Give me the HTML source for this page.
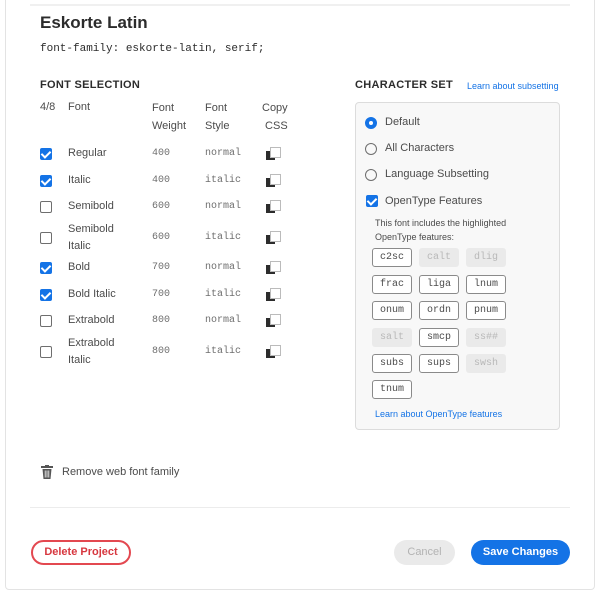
<!DOCTYPE html>
<html><head><style>
*{margin:0;padding:0;box-sizing:border-box}
body{width:600px;height:596px;background:#fff;font-family:"Liberation Sans",sans-serif;color:#2c2c2c;position:relative;overflow:hidden}
.a{position:absolute;white-space:nowrap}
.card{position:absolute;left:5px;top:-5px;width:590px;height:595px;border:1px solid #e3e3e3;border-radius:4px}
.mono{font-family:"Liberation Mono",monospace}
.cb{position:absolute;width:12px;height:12px;border-radius:2px}
.on{background:#1473e6}
.on::after{content:"";position:absolute;left:3px;top:1px;width:4px;height:7px;border:solid #fff;border-width:0 2px 2px 0;transform:rotate(45deg)}
.off{border:1.5px solid #6e6e6e}
.t{font-size:11px;color:#4b4b4b}
.m{font-size:10px;color:#6e6e6e;font-family:"Liberation Mono",monospace}
.cp{position:absolute;width:13px;height:13px}
.cp i{position:absolute;left:4px;top:0;width:9px;height:9px;border:1px solid #bbb;background:#fff}
.cp b{position:absolute;left:0;top:4px;width:9px;height:9px;background:#2c2c2c}
.cp b::after{content:"";position:absolute;left:4px;top:-4px;width:9px;height:9px;border:1px solid #bbb;background:#fff}
.chip{position:absolute;width:40px;height:19px;border:1px solid #8a8a8a;border-radius:3px;font-family:"Liberation Mono",monospace;font-size:10px;text-align:center;line-height:17px;color:#4b4b4b;background:#fff}
.dis{border-color:#eaeaea;background:#eaeaea;color:#b8b8b8}
.rad{position:absolute;width:12px;height:12px;border-radius:50%;border:1.5px solid #6e6e6e}
</style></head><body>
<div class="card"></div>
<div class="a" style="left:30px;top:4px;width:540px;border-top:2px solid #f0f0f0"></div>
<div class="a" style="left:40px;top:13px;font-size:17px;font-weight:bold;color:#2c2c2c">Eskorte Latin</div>
<div class="a mono" style="left:40px;top:43px;font-size:11px">font-family: eskorte-latin, serif;</div>
<div class="a" style="left:40px;top:79px;font-size:11px;font-weight:bold;letter-spacing:.3px">FONT SELECTION</div>
<div class="a t" style="left:40px;top:101px">4/8</div>
<div class="a t" style="left:68px;top:101px">Font</div>
<div class="a t" style="left:152px;top:101px;line-height:18px;top:99px">Font<br>Weight</div>
<div class="a t" style="left:205px;line-height:18px;top:99px">Font<br>Style</div>
<div class="a t" style="left:262px;line-height:18px;top:99px">Copy<br>&nbsp;CSS</div>

<div class="cb on" style="left:40px;top:148px"></div><div class="a t" style="left:68px;top:147px">Regular</div><div class="a m" style="left:152px;top:148px">400</div><div class="a m" style="left:205px;top:148px">normal</div><div class="cp" style="left:266px;top:147px"><b></b></div>
<div class="cb on" style="left:40px;top:175px"></div><div class="a t" style="left:68px;top:174px">Italic</div><div class="a m" style="left:152px;top:175px">400</div><div class="a m" style="left:205px;top:175px">italic</div><div class="cp" style="left:266px;top:174px"><b></b></div>
<div class="cb off" style="left:40px;top:201px"></div><div class="a t" style="left:68px;top:200px">Semibold</div><div class="a m" style="left:152px;top:201px">600</div><div class="a m" style="left:205px;top:201px">normal</div><div class="cp" style="left:266px;top:200px"><b></b></div>
<div class="cb off" style="left:40px;top:232px"></div><div class="a t" style="left:68px;top:221px;line-height:17px">Semibold<br>Italic</div><div class="a m" style="left:152px;top:232px">600</div><div class="a m" style="left:205px;top:232px">italic</div><div class="cp" style="left:266px;top:231px"><b></b></div>
<div class="cb on" style="left:40px;top:262px"></div><div class="a t" style="left:68px;top:261px">Bold</div><div class="a m" style="left:152px;top:262px">700</div><div class="a m" style="left:205px;top:262px">normal</div><div class="cp" style="left:266px;top:261px"><b></b></div>
<div class="cb on" style="left:40px;top:289px"></div><div class="a t" style="left:68px;top:288px">Bold Italic</div><div class="a m" style="left:152px;top:289px">700</div><div class="a m" style="left:205px;top:289px">italic</div><div class="cp" style="left:266px;top:288px"><b></b></div>
<div class="cb off" style="left:40px;top:315px"></div><div class="a t" style="left:68px;top:314px">Extrabold</div><div class="a m" style="left:152px;top:315px">800</div><div class="a m" style="left:205px;top:315px">normal</div><div class="cp" style="left:266px;top:314px"><b></b></div>
<div class="cb off" style="left:40px;top:346px"></div><div class="a t" style="left:68px;top:335px;line-height:17px">Extrabold<br>Italic</div><div class="a m" style="left:152px;top:346px">800</div><div class="a m" style="left:205px;top:346px">italic</div><div class="cp" style="left:266px;top:345px"><b></b></div>

<div class="a" style="left:355px;top:79px;font-size:11px;font-weight:bold;letter-spacing:.3px">CHARACTER SET</div>
<div class="a" style="left:467px;top:81px;font-size:9px;color:#1473e6">Learn about subsetting</div>
<div class="a" style="left:355px;top:102px;width:205px;height:328px;border:1px solid #dcdcdc;border-radius:4px;background:#f8f8f8"></div>
<div class="rad" style="left:365px;top:117px;border:4px solid #1473e6;background:#fff"></div><div class="a t" style="left:385px;top:116px">Default</div>
<div class="rad" style="left:365px;top:143px"></div><div class="a t" style="left:385px;top:142px">All Characters</div>
<div class="rad" style="left:365px;top:169px"></div><div class="a t" style="left:385px;top:168px">Language Subsetting</div>
<div class="cb on" style="left:366px;top:195px"></div><div class="a t" style="left:385px;top:195px">OpenType Features</div>
<div class="a" style="left:375px;top:216px;font-size:9px;line-height:14px;color:#4b4b4b">This font includes the highlighted<br>OpenType features:</div>
<div class="chip" style="left:372px;top:248px">c2sc</div><div class="chip dis" style="left:419px;top:248px">calt</div><div class="chip dis" style="left:466px;top:248px">dlig</div>
<div class="chip" style="left:372px;top:275px">frac</div><div class="chip" style="left:419px;top:275px">liga</div><div class="chip" style="left:466px;top:275px">lnum</div>
<div class="chip" style="left:372px;top:301px">onum</div><div class="chip" style="left:419px;top:301px">ordn</div><div class="chip" style="left:466px;top:301px">pnum</div>
<div class="chip dis" style="left:372px;top:328px">salt</div><div class="chip" style="left:419px;top:328px">smcp</div><div class="chip dis" style="left:466px;top:328px">ss##</div>
<div class="chip" style="left:372px;top:354px">subs</div><div class="chip" style="left:419px;top:354px">sups</div><div class="chip dis" style="left:466px;top:354px">swsh</div>
<div class="chip" style="left:372px;top:380px">tnum</div>
<div class="a" style="left:375px;top:409px;font-size:9px;color:#1473e6">Learn about OpenType features</div>

<svg class="a" style="left:41px;top:465px" width="12" height="14" viewBox="0 0 12 14"><rect x="0" y="1" width="12" height="2" fill="#555"/><rect x="4" y="0" width="4" height="2" fill="#555"/><path d="M1.5 4h9l-1 10h-7z" fill="#555"/><path d="M4.2 5.5v7M6 5.5v7M7.8 5.5v7" stroke="#fff" stroke-width=".8"/></svg>
<div class="a t" style="left:62px;top:466px">Remove web font family</div>
<div class="a" style="left:30px;top:507px;width:540px;border-top:1px solid #ececec"></div>
<div class="a" style="left:31px;top:540px;width:100px;height:25px;border:2px solid #e34850;border-radius:13px;color:#d7373f;font-size:11px;font-weight:bold;text-align:center;line-height:21px">Delete Project</div>
<div class="a" style="left:394px;top:540px;width:61px;height:25px;border-radius:13px;background:#eaeaea;color:#b3b3b3;font-size:11px;text-align:center;line-height:25px">Cancel</div>
<div class="a" style="left:471px;top:540px;width:99px;height:25px;border-radius:13px;background:#1473e6;color:#fff;font-size:11px;font-weight:bold;text-align:center;line-height:25px">Save Changes</div>
</body></html>
